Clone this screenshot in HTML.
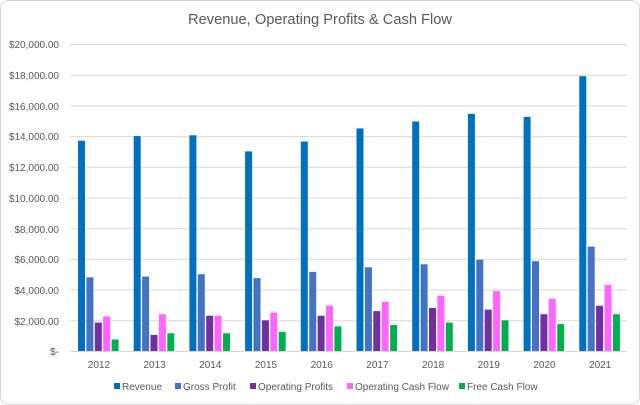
<!DOCTYPE html>
<html><head><meta charset="utf-8"><style>
html,body{margin:0;padding:0;background:#fff;}
svg{display:block;font-family:"Liberation Sans",sans-serif;}
</style></head><body>
<svg width="640" height="405" viewBox="0 0 640 405" xmlns="http://www.w3.org/2000/svg">
<rect x="0.5" y="0.5" width="639" height="404" rx="8" fill="#fff" stroke="#d9d9d9"/>
<text x="320" y="24" text-anchor="middle" font-size="15" fill="#595959" textLength="264" lengthAdjust="spacingAndGlyphs">Revenue, Operating Profits &amp; Cash Flow</text>
<g stroke="#d9d9d9" stroke-width="1">
<line x1="70" x2="627" y1="44.5" y2="44.5"/><line x1="70" x2="627" y1="75.2" y2="75.2"/>
<line x1="70" x2="627" y1="105.9" y2="105.9"/><line x1="70" x2="627" y1="136.6" y2="136.6"/>
<line x1="70" x2="627" y1="167.3" y2="167.3"/><line x1="70" x2="627" y1="198" y2="198"/>
<line x1="70" x2="627" y1="228.7" y2="228.7"/><line x1="70" x2="627" y1="259.4" y2="259.4"/>
<line x1="70" x2="627" y1="290.1" y2="290.1"/><line x1="70" x2="627" y1="320.8" y2="320.8"/>
<line x1="70" x2="627" y1="351.5" y2="351.5"/>
</g>
<g font-size="10" fill="#595959" text-anchor="end">
<text x="59" y="48">$20,000.00</text><text x="59" y="79">$18,000.00</text>
<text x="59" y="110">$16,000.00</text><text x="59" y="140">$14,000.00</text>
<text x="59" y="171">$12,000.00</text><text x="59" y="202">$10,000.00</text>
<text x="59" y="233">$8,000.00</text><text x="59" y="263">$6,000.00</text>
<text x="59" y="294">$4,000.00</text><text x="59" y="325">$2,000.00</text>
<text x="59" y="355">$-</text>
</g>
<defs>
<style>.r{fill:#0070c0}.g{fill:#4472c4}.o{fill:#7030a0}.c{fill:#ff66ff}.f{fill:#00b050}</style>
</defs>
<g transform="translate(78,0)"><rect class="r" x="0" y="140.7" width="7" height="210.3"/><rect class="g" x="8.4" y="277.3" width="7" height="73.7"/><rect class="o" x="16.8" y="322.6" width="7" height="28.4"/><rect class="c" x="25.2" y="316.5" width="7" height="34.5"/><rect class="f" x="33.6" y="339.5" width="7" height="11.5"/></g>
<g transform="translate(133.7,0)"><rect class="r" x="0" y="136.1" width="7" height="214.9"/><rect class="g" x="8.4" y="276.6" width="7" height="74.4"/><rect class="o" x="16.8" y="334.9" width="7" height="16.1"/><rect class="c" x="25.2" y="314.2" width="7" height="36.8"/><rect class="f" x="33.6" y="333.3" width="7" height="17.7"/></g>
<g transform="translate(189.4,0)"><rect class="r" x="0" y="135.3" width="7" height="215.7"/><rect class="g" x="8.4" y="274.2" width="7" height="76.8"/><rect class="o" x="16.8" y="315.7" width="7" height="35.3"/><rect class="c" x="25.2" y="315.7" width="7" height="35.3"/><rect class="f" x="33.6" y="333.3" width="7" height="17.7"/></g>
<g transform="translate(245.1,0)"><rect class="r" x="0" y="151.4" width="7" height="199.6"/><rect class="g" x="8.4" y="278.1" width="7" height="72.9"/><rect class="o" x="16.8" y="320.3" width="7" height="30.7"/><rect class="c" x="25.2" y="312.6" width="7" height="38.4"/><rect class="f" x="33.6" y="331.8" width="7" height="19.2"/></g>
<g transform="translate(300.8,0)"><rect class="r" x="0" y="141.5" width="7" height="209.5"/><rect class="g" x="8.4" y="271.9" width="7" height="79.1"/><rect class="o" x="16.8" y="315.7" width="7" height="35.3"/><rect class="c" x="25.2" y="305.7" width="7" height="45.3"/><rect class="f" x="33.6" y="326.4" width="7" height="24.6"/></g>
<g transform="translate(356.5,0)"><rect class="r" x="0" y="128.4" width="7" height="222.6"/><rect class="g" x="8.4" y="267.3" width="7" height="83.7"/><rect class="o" x="16.8" y="311.1" width="7" height="39.9"/><rect class="c" x="25.2" y="301.9" width="7" height="49.1"/><rect class="f" x="33.6" y="324.9" width="7" height="26.1"/></g>
<g transform="translate(412.2,0)"><rect class="r" x="0" y="121.5" width="7" height="229.5"/><rect class="g" x="8.4" y="264.3" width="7" height="86.7"/><rect class="o" x="16.8" y="308" width="7" height="43"/><rect class="c" x="25.2" y="295.7" width="7" height="55.3"/><rect class="f" x="33.6" y="322.6" width="7" height="28.4"/></g>
<g transform="translate(467.9,0)"><rect class="r" x="0" y="113.8" width="7" height="237.2"/><rect class="g" x="8.4" y="259.7" width="7" height="91.3"/><rect class="o" x="16.8" y="309.6" width="7" height="41.4"/><rect class="c" x="25.2" y="291.1" width="7" height="59.9"/><rect class="f" x="33.6" y="320.3" width="7" height="30.7"/></g>
<g transform="translate(523.6,0)"><rect class="r" x="0" y="116.9" width="7" height="234.1"/><rect class="g" x="8.4" y="261.2" width="7" height="89.8"/><rect class="o" x="16.8" y="314.2" width="7" height="36.8"/><rect class="c" x="25.2" y="298.8" width="7" height="52.2"/><rect class="f" x="33.6" y="324.1" width="7" height="26.9"/></g>
<g transform="translate(579.3,0)"><rect class="r" x="0" y="76.2" width="7" height="274.8"/><rect class="g" x="8.4" y="246.6" width="7" height="104.4"/><rect class="o" x="16.8" y="305.7" width="7" height="45.3"/><rect class="c" x="25.2" y="285" width="7" height="66"/><rect class="f" x="33.6" y="314.2" width="7" height="36.8"/></g>
<g font-size="10" fill="#595959" text-anchor="middle">
<text x="98.9" y="368">2012</text><text x="154.6" y="368">2013</text><text x="210.3" y="368">2014</text>
<text x="266" y="368">2015</text><text x="321.7" y="368">2016</text><text x="377.4" y="368">2017</text>
<text x="433.1" y="368">2018</text><text x="488.8" y="368">2019</text><text x="544.5" y="368">2020</text>
<text x="600.2" y="368">2021</text>
</g>
<g font-size="10" fill="#595959">
<rect x="114" y="383" width="6" height="6" fill="#0070c0"/><text x="122" y="390">Revenue</text>
<rect x="175" y="383" width="6" height="6" fill="#4472c4"/><text x="183" y="390">Gross Profit</text>
<rect x="250" y="383" width="6" height="6" fill="#7030a0"/><text x="258" y="390">Operating Profits</text>
<rect x="347" y="383" width="6" height="6" fill="#ff66ff"/><text x="355" y="390">Operating Cash Flow</text>
<rect x="459" y="383" width="6" height="6" fill="#00b050"/><text x="467" y="390">Free Cash Flow</text>
</g>
</svg>
</body></html>
